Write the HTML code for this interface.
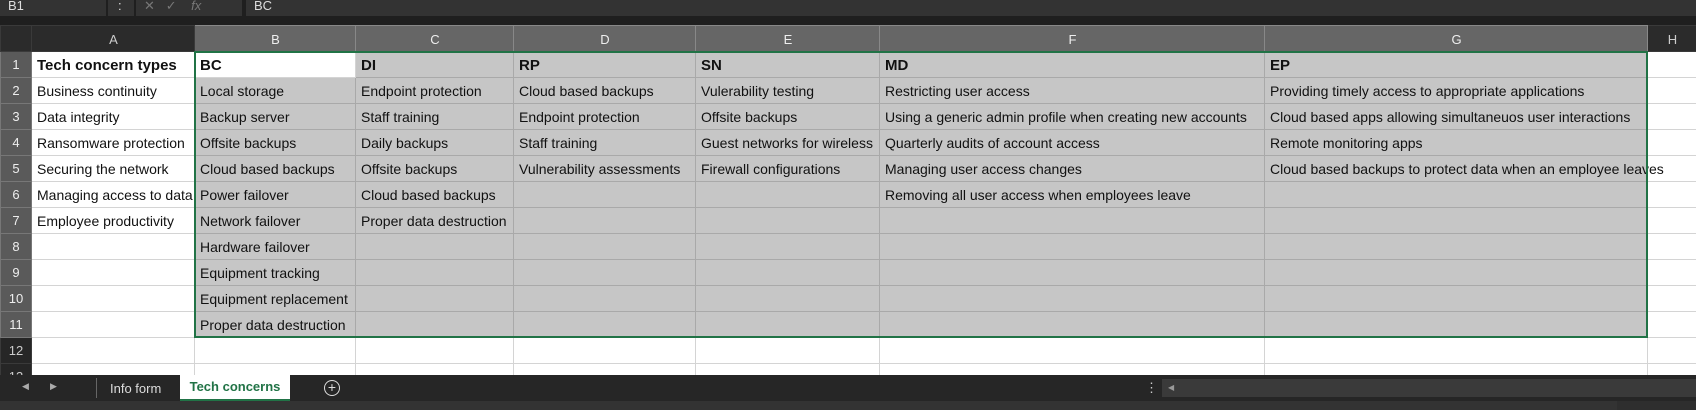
<!DOCTYPE html>
<html><head><meta charset="utf-8"><style>
*{margin:0;padding:0;box-sizing:border-box}
body{width:1696px;height:410px;overflow:hidden;background:#1f1f1f;font-family:"Liberation Sans",sans-serif;position:relative}
#fb{position:absolute;left:0;top:0;width:1696px;height:17px;background:#1f1f1f}
.box{position:absolute;top:0;height:16px;background:#333;color:#ddd;font-size:13px;line-height:12px;padding-left:8px}
table{position:absolute;left:0;top:25px;width:1696px;border-collapse:collapse;table-layout:fixed}
td{height:26px;font-size:14px;color:#111;padding:1px 4px 0 5px;white-space:nowrap;overflow:visible;border:1px solid #d4d4d4;background:#fff}
td.g{background:#c6c6c6;border-color:#a9a9a9}
td.b{font-weight:bold;font-size:15px}
tr.h td{background:#2b2b2b;color:#ccc;text-align:center;border:1px solid #3a3a3a;height:26px;font-size:13px}
tr.h td.s{background:#666;color:#eee;border-color:#888}
td.r{background:#5a5a5a;color:#eee;text-align:center;border:1px solid #777;font-size:13px;padding:0}
td.rd{background:#262626;color:#ccc;text-align:center;border:1px solid #3a3a3a;font-size:13px;padding:0}
#sel{position:absolute;left:194px;top:51px;width:1454px;height:287px;border:2px solid #217346;pointer-events:none}
#tabs{position:absolute;left:0;top:375px;width:1696px;height:26px;background:#262626;color:#ddd;font-size:13px}
#bot{position:absolute;left:0;top:401px;width:1696px;height:9px;background:#2e2e2e}
</style></head><body>
<div id="fb">
<div class="box" style="left:0;width:106px">B1</div>
<div class="box" style="left:108px;width:26px;padding-left:10px">:</div>
<div class="box" style="left:136px;width:106px;color:#777">✕ &nbsp; ✓ &nbsp;&nbsp; <i>fx</i></div>
<div class="box" style="left:246px;width:1450px">BC</div>
</div>
<table>
<colgroup><col style="width:31px"><col style="width:163px"><col style="width:161px"><col style="width:158px"><col style="width:182px"><col style="width:184px"><col style="width:385px"><col style="width:383px"><col style="width:49px"></colgroup>
<tr class="h"><td style="background:#2b2b2b"></td><td>A</td><td class="s">B</td><td class="s">C</td><td class="s">D</td><td class="s">E</td><td class="s">F</td><td class="s">G</td><td>H</td></tr>
<tr><td class="r">1</td><td class="b">Tech concern types</td><td class="b">BC</td><td class="g b">DI</td><td class="g b">RP</td><td class="g b">SN</td><td class="g b">MD</td><td class="g b">EP</td><td></td></tr>
<tr><td class="r">2</td><td>Business continuity</td><td class="g">Local storage</td><td class="g">Endpoint protection</td><td class="g">Cloud based backups</td><td class="g">Vulerability testing</td><td class="g">Restricting user access</td><td class="g">Providing timely access to appropriate applications</td><td></td></tr>
<tr><td class="r">3</td><td>Data integrity</td><td class="g">Backup server</td><td class="g">Staff training</td><td class="g">Endpoint protection</td><td class="g">Offsite backups</td><td class="g">Using a generic admin profile when creating new accounts</td><td class="g">Cloud based apps allowing simultaneuos user interactions</td><td></td></tr>
<tr><td class="r">4</td><td>Ransomware protection</td><td class="g">Offsite backups</td><td class="g">Daily backups</td><td class="g">Staff training</td><td class="g">Guest networks for wireless</td><td class="g">Quarterly audits of account access</td><td class="g">Remote monitoring apps</td><td></td></tr>
<tr><td class="r">5</td><td>Securing the network</td><td class="g">Cloud based backups</td><td class="g">Offsite backups</td><td class="g">Vulnerability assessments</td><td class="g">Firewall configurations</td><td class="g">Managing user access changes</td><td class="g">Cloud based backups to protect data when an employee leaves</td><td></td></tr>
<tr><td class="r">6</td><td style="overflow:hidden">Managing access to data</td><td class="g">Power failover</td><td class="g">Cloud based backups</td><td class="g"></td><td class="g"></td><td class="g">Removing all user access when employees leave</td><td class="g"></td><td></td></tr>
<tr><td class="r">7</td><td>Employee productivity</td><td class="g">Network failover</td><td class="g">Proper data destruction</td><td class="g"></td><td class="g"></td><td class="g"></td><td class="g"></td><td></td></tr>
<tr><td class="r">8</td><td></td><td class="g">Hardware failover</td><td class="g"></td><td class="g"></td><td class="g"></td><td class="g"></td><td class="g"></td><td></td></tr>
<tr><td class="r">9</td><td></td><td class="g">Equipment tracking</td><td class="g"></td><td class="g"></td><td class="g"></td><td class="g"></td><td class="g"></td><td></td></tr>
<tr><td class="r">10</td><td></td><td class="g">Equipment replacement</td><td class="g"></td><td class="g"></td><td class="g"></td><td class="g"></td><td class="g"></td><td></td></tr>
<tr><td class="r">11</td><td></td><td class="g">Proper data destruction</td><td class="g"></td><td class="g"></td><td class="g"></td><td class="g"></td><td class="g"></td><td></td></tr>
<tr><td class="rd">12</td><td></td><td></td><td></td><td></td><td></td><td></td><td></td><td></td></tr>
<tr><td class="rd">13</td><td></td><td></td><td></td><td></td><td></td><td></td><td></td><td></td></tr>
</table>
<div id="sel"></div>
<div id="tabs">
<span style="position:absolute;left:22px;top:6px;font-size:9px;color:#aaa">◀</span>
<span style="position:absolute;left:50px;top:6px;font-size:9px;color:#aaa">▶</span>
<div style="position:absolute;left:96px;top:3px;width:1px;height:20px;background:#666"></div>
<span style="position:absolute;left:110px;top:6px">Info form</span>
<div style="position:absolute;left:180px;top:0;width:110px;height:26px;background:#fff;border-bottom:2px solid #217346;color:#217346;font-weight:bold;text-align:center;line-height:24px">Tech concerns</div>
<div style="position:absolute;left:324px;top:5px;width:16px;height:16px;border:1.5px solid #ddd;border-radius:50%;text-align:center;line-height:13px;font-size:14px">+</div>
<span style="position:absolute;left:1145px;top:5px;color:#ccc">⋮</span>
<div style="position:absolute;left:1162px;top:4px;width:534px;height:18px;background:#3a3a3a"></div>
<span style="position:absolute;left:1168px;top:8px;font-size:8px;color:#999">◀</span>
</div>
<div id="bot"><div style="position:absolute;left:0;top:0;width:1617px;height:9px;background:#333"></div></div>
</body></html>
